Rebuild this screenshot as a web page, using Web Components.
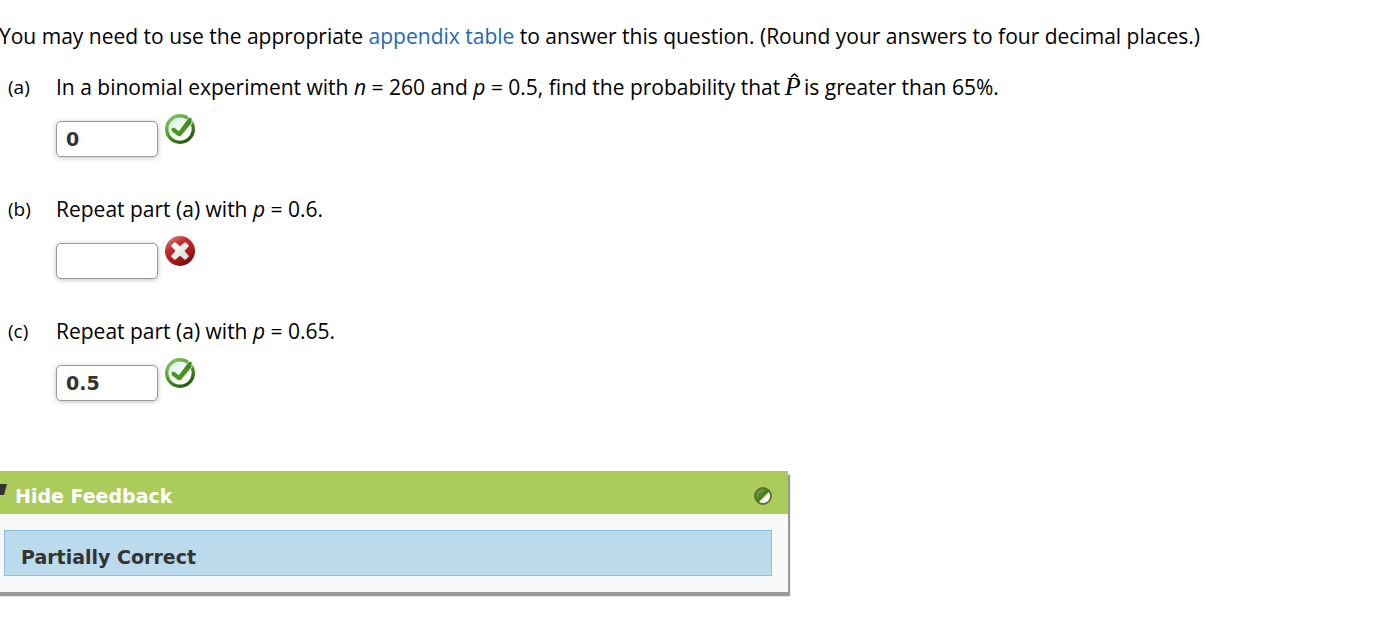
<!DOCTYPE html>
<html lang="en">
<head>
<meta charset="utf-8">
<meta name="viewport" content="width=device-width, initial-scale=1">
<title>Binomial experiment</title>
<style>
  body {
    margin: 0;
    background: #fff;
    color: #000;
    font-family: "Open Sans", "Noto Sans", sans-serif;
    font-size: 21px;
    line-height: 30px;
    overflow-x: hidden;
  }
</style>
</head>
<body>
<question-page></question-page>

<script>
class MarkIcon extends HTMLElement {
  connectedCallback() {
    const correct = this.getAttribute('type') === 'correct';
    this.attachShadow({ mode: 'open' });
    this.shadowRoot.innerHTML = `
      <style>
        :host {
          display: block;
          width: 30px;
          height: 30px;
        }
        svg {
          display: block;
        }
      </style>
      ${correct ? this.check() : this.cross()}
    `;
  }

  check() {
    return `
      <svg width="30" height="30" viewBox="0 0 30 30" role="img" aria-label="Correct">
        <defs>
          <linearGradient id="ring" x1="0" y1="0" x2="0.6" y2="1">
            <stop offset="0" stop-color="#8cc46e"/>
            <stop offset="0.5" stop-color="#55a32f"/>
            <stop offset="1" stop-color="#265f12"/>
          </linearGradient>
          <linearGradient id="face" x1="0" y1="0" x2="1" y2="1">
            <stop offset="0" stop-color="#c9e6dc"/>
            <stop offset="0.6" stop-color="#fff"/>
          </linearGradient>
          <linearGradient id="tick" x1="0" y1="0" x2="0" y2="1">
            <stop offset="0" stop-color="#3f8a24"/>
            <stop offset="1" stop-color="#4d9a22"/>
          </linearGradient>
        </defs>
        <circle cx="15" cy="15" r="13.3" fill="url(#face)" stroke="url(#ring)" stroke-width="3.4"/>
        <path d="M6 14.2 L9 13 L13.8 16.8 L23.6 3.4 L27 3.6 L27 9 L15.8 22.6 L13.2 22.6 L6.4 17.4 Z" fill="url(#tick)" stroke="#fff" stroke-width="0.8"/>
      </svg>`;
  }

  cross() {
    return `
      <svg width="30" height="30" viewBox="0 0 30 30" role="img" aria-label="Incorrect">
        <defs>
          <linearGradient id="ball" x1="0.2" y1="0" x2="0.8" y2="1">
            <stop offset="0" stop-color="#d77c78"/>
            <stop offset="0.3" stop-color="#bf302c"/>
            <stop offset="0.65" stop-color="#a81b19"/>
            <stop offset="1" stop-color="#650b0b"/>
          </linearGradient>
          <linearGradient id="bars" x1="0" y1="0" x2="1" y2="1">
            <stop offset="0" stop-color="#fff"/>
            <stop offset="1" stop-color="#d9d9d9"/>
          </linearGradient>
        </defs>
        <circle cx="15" cy="15" r="15" fill="url(#ball)"/>
        <path d="M9.8 7.5 L15 12 L20.2 7.5 L22.6 9.8 L18 15 L22.6 20.2 L20.2 22.5 L15 18 L9.8 22.5 L7.4 20.2 L12 15 L7.4 9.8 Z" fill="url(#bars)" stroke="url(#bars)" stroke-width="2.4" stroke-linejoin="round"/>
      </svg>`;
  }
}

class QuestionPart extends HTMLElement {
  connectedCallback() {
    const part = this.getAttribute('part-id');
    this.attachShadow({ mode: 'open' });
    this.shadowRoot.innerHTML = `
      <style>
        :host {
          display: grid;
          grid-template-columns: 48px 1fr;
          padding-left: 8px;
        }
        .letter {
          font-size: 19px;
        }
        label {
          display: block;
        }
        .answer {
          display: flex;
          align-items: flex-start;
          gap: 7px;
          padding-top: 12px;
        }
        input {
          box-sizing: border-box;
          width: 102px;
          height: 36px;
          margin: 7px 0 0;
          padding: 0 9px;
          border: 1px solid #999;
          border-radius: 5px;
          background: #fff;
          box-shadow: 0 1px 5px rgba(0, 0, 0, 0.25);
          color: #333;
          font: bold 19px "DejaVu Sans", Verdana, sans-serif;
        }
      </style>
      <span class="letter">(${part})</span>
      <div>
        <label for="answer"><slot></slot></label>
        <div class="answer">
          <input id="answer" type="text" value="${this.getAttribute('value') || ''}">
          <mark-icon type="${this.getAttribute('mark')}"></mark-icon>
        </div>
      </div>
    `;
  }
}

class HatSymbol extends HTMLElement {
  connectedCallback() {
    this.attachShadow({ mode: 'open' });
    this.shadowRoot.innerHTML = `
      <style>
        :host {
          display: inline-block;
          position: relative;
          margin: 0 -2px 0 -1px;
          font: italic 26px/24px "Liberation Serif", serif;
        }
        svg {
          position: absolute;
          top: -2px;
          left: 5px;
        }
      </style>
      <slot></slot>
      <svg width="9" height="5" viewBox="0 0 9 5" aria-hidden="true">
        <path d="M1 4 L4.5 1 L8 4" fill="none" stroke="#000" stroke-width="1.5"/>
      </svg>
    `;
  }
}

class FeedbackPanel extends HTMLElement {
  connectedCallback() {
    this.attachShadow({ mode: 'open' });
    this.shadowRoot.innerHTML = `
      <style>
        :host {
          display: block;
          max-width: 788px;
          background: #f8f8f8;
          box-shadow: 2px 4px 1px #999, 0 4px 1px #999;
          font: bold 19px/24px "DejaVu Sans", Verdana, sans-serif;
        }
        button {
          display: flex;
          align-items: center;
          box-sizing: border-box;
          width: 100%;
          padding: 13px 16px 6px 0;
          border: 0;
          background: #abcc5b;
          color: #fff;
          font: inherit;
          text-align: left;
          cursor: pointer;
        }
        .arrow {
          margin: 0 8px 12px -3px;
        }
        .title {
          flex: 1;
        }
        .body {
          padding: 16px 16px 16px 4px;
        }
        .body[hidden] {
          display: none;
        }
        .status {
          padding: 14px 16px 6px;
          border: 1px solid #8abfdf;
          background: #bbdaec;
          color: #333;
        }
      </style>
      <button type="button" aria-expanded="true">
        <svg class="arrow" width="10" height="12" viewBox="0 0 10 12" aria-hidden="true">
          <path d="M0 0 H10 L7 11 H3 Z" fill="#333"/>
        </svg>
        <span class="title">Hide Feedback</span>
        <svg width="18" height="18" viewBox="0 0 18 18" aria-hidden="true">
          <defs>
            <linearGradient id="half" x1="0" y1="0" x2="1" y2="1">
              <stop offset="0" stop-color="#a4bf7a"/>
              <stop offset="0.35" stop-color="#568c20"/>
              <stop offset="0.52" stop-color="#477d18"/>
              <stop offset="0.6" stop-color="#fff"/>
            </linearGradient>
          </defs>
          <circle cx="9" cy="9" r="8" fill="url(#half)" stroke="#5d6b38" stroke-width="1.8"/>
        </svg>
      </button>
      <div class="body"><div class="status"><slot></slot></div></div>
    `;
    const button = this.shadowRoot.querySelector('button');
    const body = this.shadowRoot.querySelector('.body');
    button.addEventListener('click', () => {
      body.hidden = !body.hidden;
      button.setAttribute('aria-expanded', String(!body.hidden));
      this.shadowRoot.querySelector('.title').textContent = body.hidden ? 'Show Feedback' : 'Hide Feedback';
    });
  }
}

class QuestionPage extends HTMLElement {
  connectedCallback() {
    this.attachShadow({ mode: 'open' });
    this.shadowRoot.innerHTML = `
      <style>
        :host {
          display: block;
          padding: 21px 0 32px;
        }
        p {
          margin: 0 0 21px -1px;
        }
        a {
          color: #2368b8;
          text-decoration: none;
        }
        a:hover {
          text-decoration: underline;
        }
        .parts {
          display: grid;
          gap: 37px;
          margin-bottom: 70px;
        }
      </style>
      <p>You may need to use the appropriate <a href="#">appendix table</a> to answer this question. (Round your answers to four decimal places.)</p>
      <div class="parts">
        <question-part part-id="a" value="0" mark="correct">In a binomial experiment with <i>n</i> = 260 and <i>p</i> = 0.5, find the probability that <hat-symbol>P</hat-symbol> is greater than 65%.</question-part>
        <question-part part-id="b" mark="incorrect">Repeat part (a) with <i>p</i> = 0.6.</question-part>
        <question-part part-id="c" value="0.5" mark="correct">Repeat part (a) with <i>p</i> = 0.65.</question-part>
      </div>
      <feedback-panel>Partially Correct</feedback-panel>
    `;
  }
}

customElements.define('mark-icon', MarkIcon);
customElements.define('hat-symbol', HatSymbol);
customElements.define('question-part', QuestionPart);
customElements.define('feedback-panel', FeedbackPanel);
customElements.define('question-page', QuestionPage);
</script>
</body>
</html>
